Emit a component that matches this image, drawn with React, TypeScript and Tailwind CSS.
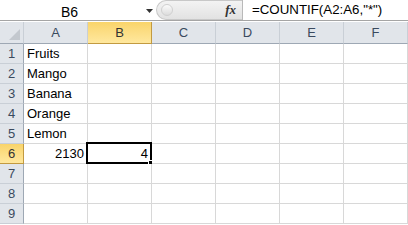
import React from 'react'

const cols = ['A', 'B', 'C', 'D', 'E', 'F']

const data: Record<string, { v: string; right?: boolean }> = {
  A1: { v: 'Fruits' },
  A2: { v: 'Mango' },
  A3: { v: 'Banana' },
  A4: { v: 'Orange' },
  A5: { v: 'Lemon' },
  A6: { v: '2130', right: true },
  B6: { v: '4', right: true },
}

const font = { fontFamily: '"Liberation Sans", Arial, sans-serif' }

function ColHeader({ label, active }: { label: string; active?: boolean }) {
  return (
    <div
      className={
        active
          ? 'h-[22px] flex items-center justify-center text-[13px] text-[#333] border-r border-b border-[#c29a41] bg-gradient-to-b from-[#f9d46a] to-[#ffe89e]'
          : 'h-[22px] flex items-center justify-center text-[13px] text-[#3a4a5e] border-r border-[#c9cfd6] border-b border-b-[#9ea8b4] bg-[#e1e5ea]'
      }
    >
      {label}
    </div>
  )
}

function RowHeader({ n, active }: { n: number; active?: boolean }) {
  return (
    <div
      className={
        active
          ? 'h-[20px] flex items-center justify-center text-[13px] text-[#333] border-r border-b border-[#c29a41] bg-gradient-to-b from-[#f9d46a] to-[#ffe89e]'
          : 'h-[20px] flex items-center justify-center text-[13px] text-[#3a4a5e] border-r border-r-[#9ea8b4] border-b border-[#c9cfd6] bg-[#e1e5ea]'
      }
    >
      {n}
    </div>
  )
}

function Cell({ id }: { id: string }) {
  const d = data[id]
  const selected = id === 'B6'
  return (
    <div className="relative h-[20px] border-r border-b border-[#d8d8d8] bg-white">
      {d && (
        <div
          className={
            'absolute inset-0 flex items-end pb-[1px] px-[3px] text-[13px] text-black leading-none ' +
            (d.right ? 'justify-end' : 'justify-start')
          }
        >
          <span className="pb-[2px]">{d.v}</span>
        </div>
      )}
      {selected && (
        <>
          <div className="absolute -left-[2px] -top-[2px] -right-[1px] -bottom-[1px] border-2 border-black" />
          <div className="absolute -right-[3px] -bottom-[3px] w-[6px] h-[6px] bg-black border border-white" />
        </>
      )}
    </div>
  )
}

export default function App() {
  return (
    <div className="w-[408px] h-[225px] overflow-hidden bg-white" style={font}>
      {/* formula bar */}
      <div className="flex h-[21px] border-b border-[#a5a5a5]">
        <div className="w-[156px] flex items-center relative">
          <span className="absolute left-[61px] top-[2px] text-[14px] text-black">B6</span>
          <svg className="absolute left-[146px] top-[9px]" width="7" height="4" viewBox="0 0 7 4">
            <path d="M0 0h7L3.5 4z" fill="#333" />
          </svg>
        </div>
        <div className="w-[86px] h-[20px] rounded-l-full bg-gradient-to-b from-[#f3f3f3] to-[#e2e2e2] border border-r-0 border-[#c8c8c8] flex items-center relative">
          <div className="absolute left-[4px] top-[3px] w-[12px] h-[12px] rounded-full bg-gradient-to-b from-[#fbfbfb] to-[#dcdcdc] border border-[#d0d0d0]" />
          <span className="ml-auto mr-[6px] text-[13px] italic font-bold text-[#333]" style={{ fontFamily: '"Liberation Serif", serif' }}>
            fx
          </span>
        </div>
        <div className="flex-1 border-l border-[#b9b9b9] flex items-center pl-[9px] text-[13.3px] text-black">
          =COUNTIF(A2:A6,"*")
        </div>
      </div>
      <div className="h-[1px]" />
      {/* grid */}
      <div className="grid grid-cols-[24px_repeat(6,64px)]">
        <div className="relative h-[22px] border-r border-[#c9cfd6] border-b border-b-[#9ea8b4] bg-[#e1e5ea]">
          <svg className="absolute right-[3px] bottom-[3px]" width="11" height="11" viewBox="0 0 11 11">
            <path d="M11 0V11H0z" fill="#c3c8ce" />
          </svg>
        </div>
        {cols.map((c) => (
          <ColHeader key={c} label={c} active={c === 'B'} />
        ))}
        {Array.from({ length: 9 }, (_, i) => i + 1).map((r) => (
          <React.Fragment key={r}>
            <RowHeader n={r} active={r === 6} />
            {cols.map((c) => (
              <Cell key={c + r} id={c + r} />
            ))}
          </React.Fragment>
        ))}
      </div>
    </div>
  )
}
